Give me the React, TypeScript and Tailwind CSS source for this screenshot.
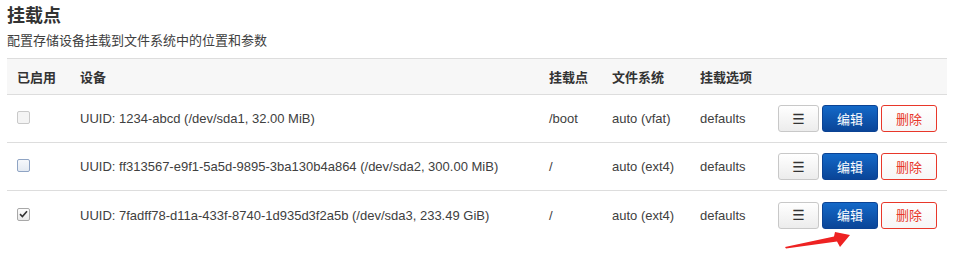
import React from "react";

const rows = [
  { state: "disabled", dev: "UUID: 1234-abcd (/dev/sda1, 32.00 MiB)", mp: "/boot", fs: "auto (vfat)", opt: "defaults" },
  { state: "off", dev: "UUID: ff313567-e9f1-5a5d-9895-3ba130b4a864 (/dev/sda2, 300.00 MiB)", mp: "/", fs: "auto (ext4)", opt: "defaults" },
  { state: "on", dev: "UUID: 7fadff78-d11a-433f-8740-1d935d3f2a5b (/dev/sda3, 233.49 GiB)", mp: "/", fs: "auto (ext4)", opt: "defaults" },
];

const cols = "grid grid-cols-[63px_469px_63px_88px_78px_1fr]";

function Checkbox({ state }: { state: string }) {
  if (state === "on") {
    return (
      <div className="w-[13px] h-[13px] rounded-[2px] border border-[#a8a8a8] bg-gradient-to-b from-[#fdfdfd] to-[#e9e9e9] flex items-center justify-center">
        <svg width="9" height="8" viewBox="0 0 9 8">
          <path d="M1 4.2 L3.4 6.5 L8 1.3" fill="none" stroke="#333" strokeWidth="1.6" />
        </svg>
      </div>
    );
  }
  if (state === "off") {
    return <div className="w-[13px] h-[13px] rounded-[2px] border border-[#8fa4c4] bg-gradient-to-b from-[#f6f8fb] to-[#e4eaf2]" />;
  }
  return <div className="w-[13px] h-[13px] rounded-[2px] border border-[#c9c9c9] bg-[#f4f4f4]" />;
}

export default function App() {
  return (
    <div className="relative w-[957px] h-[255px] bg-white text-[#333] font-['Liberation_Sans','Noto_Sans_CJK_SC',sans-serif] overflow-hidden">
      <div className="pl-[7px] pt-[3px]">
        <h2 className="text-[18px] leading-[22px] font-bold text-[#333] font-['Noto_Sans_CJK_SC',sans-serif]">挂载点</h2>
        <p className="mt-[6px] text-[13px] leading-[18px] text-[#404040] font-['Noto_Sans_CJK_SC',sans-serif]">配置存储设备挂载到文件系统中的位置和参数</p>
      </div>
      <div className="ml-[7px] mt-[9px] w-[940px]">
        <div className={`${cols} h-[37px] items-center bg-[#f7f7f7] border-y border-[#dddddd] text-[13px] font-bold text-[#333] font-['Noto_Sans_CJK_SC',sans-serif]`}>
          <div className="pl-[10px]">已启用</div>
          <div className="pl-[10px]">设备</div>
          <div className="pl-[10px]">挂载点</div>
          <div className="pl-[10px]">文件系统</div>
          <div className="pl-[10px]">挂载选项</div>
          <div />
        </div>
        {rows.map((r, i) => (
          <div key={i} className={`${cols} h-[48px] items-center text-[13px] text-[#404040] ${i < 2 ? "border-b border-[#dddddd]" : ""}`}>
            <div className="pl-[10px] pb-[2px]">
              <Checkbox state={r.state} />
            </div>
            <div className="pl-[10px] pt-[1px] whitespace-nowrap">{r.dev}</div>
            <div className="pl-[10px] pt-[1px]">{r.mp}</div>
            <div className="pl-[10px] pt-[1px]">{r.fs}</div>
            <div className="pl-[10px] pt-[1px]">{r.opt}</div>
            <div className="pl-[10px] flex gap-[3px]">
              <button className="w-[41px] h-[27px] rounded-[3px] border border-[#c8c8c8] bg-gradient-to-b from-white to-[#ececec] text-[#333] text-[14px] leading-none font-['DejaVu_Sans',sans-serif]">☰</button>
              <button className="w-[56px] h-[27px] rounded-[3px] border border-[#0b4394] bg-gradient-to-b from-[#1469c8] to-[#0a4598] text-white text-[13px] font-['Noto_Sans_CJK_SC',sans-serif]">编辑</button>
              <button className="w-[56px] h-[27px] rounded-[3px] border border-[#e8372a] bg-gradient-to-b from-white to-[#f6f6f6] text-[#e8372a] text-[13px] font-['Noto_Sans_CJK_SC',sans-serif]">删除</button>
            </div>
          </div>
        ))}
      </div>
      <svg className="absolute left-[780px] top-[222px]" width="80" height="30" viewBox="0 0 80 30">
        <path d="M5 25 L54 14.5 L55 10 L70 13 L60 25 L57 19.5 L6 26.5 Z" fill="#ee2222" />
      </svg>
    </div>
  );
}
